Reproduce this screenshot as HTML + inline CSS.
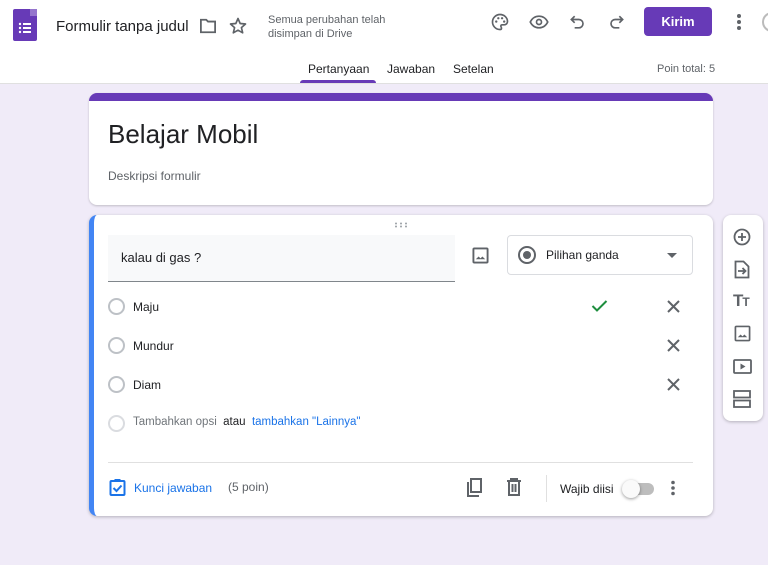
<!DOCTYPE html>
<html><head><style>
*{margin:0;padding:0;box-sizing:border-box}
body{width:768px;height:565px;overflow:hidden;background:#f0ebf8;font-family:"Liberation Sans",Arial,sans-serif;color:#202124;position:relative}
.a{position:absolute}
svg{display:block}
</style></head><body>
<div class="a" style="left:0;top:0;width:768px;height:84px;background:#fff;border-bottom:1px solid #e0e0e0"></div>
<div class="a" style="left:13px;top:9px;width:24px;height:32px;background:#673ab7;border-radius:2px"></div>
<div class="a" style="left:30px;top:9px;width:7px;height:7px;background:#9575cd"></div>
<svg class="a" style="left:13px;top:9px" width="24" height="32"><g fill="#fff"><circle cx="7" cy="15" r="1.2"/><circle cx="7" cy="19" r="1.2"/><circle cx="7" cy="23" r="1.2"/><rect x="10" y="14" width="8" height="2"/><rect x="10" y="18" width="8" height="2"/><rect x="10" y="22" width="8" height="2"/></g></svg>
<div class="a" style="left:56px;top:18px;font-size:15px;color:#202124">Formulir tanpa judul</div>
<svg class="a" style="left:199px;top:18px" width="18" height="16" viewBox="0 0 20 18"><path d="M2 2h6l2 2h8v12H2z" fill="none" stroke="#5f6368" stroke-width="2"/></svg>
<svg class="a" style="left:228px;top:16px" width="20" height="20" viewBox="0 0 24 24"><path d="M12 3l2.6 6 6.4.6-4.9 4.3 1.5 6.3L12 17l-5.6 3.2 1.5-6.3L3 9.6l6.4-.6z" fill="none" stroke="#5f6368" stroke-width="2" stroke-linejoin="round"/></svg>
<div class="a" style="left:268px;top:13px;font-size:11px;color:#5f6368;line-height:14px">Semua perubahan telah<br>disimpan di Drive</div>
<svg class="a" style="left:490px;top:12px" width="20" height="20" viewBox="0 0 24 24"><path d="M12 3a9 9 0 0 0 0 18c1.2 0 1.8-.8 1.8-1.7 0-1-.8-1.3-.8-2.3 0-1 .8-1.6 1.8-1.6H17a4 4 0 0 0 4-4c0-4.6-4-8.4-9-8.4z" fill="none" stroke="#5f6368" stroke-width="2"/><g fill="#5f6368"><circle cx="7.5" cy="11.5" r="1.4"/><circle cx="10" cy="7.5" r="1.4"/><circle cx="14.5" cy="7.5" r="1.4"/><circle cx="17" cy="11.5" r="1.4"/></g></svg>
<svg class="a" style="left:528px;top:12px" width="22" height="20" viewBox="0 0 24 24"><path d="M1.5 12C4 7 8 5 12 5s8 2 10.5 7C20 17 16 19 12 19S4 17 1.5 12z" fill="none" stroke="#5f6368" stroke-width="2"/><circle cx="12" cy="12" r="3" fill="none" stroke="#5f6368" stroke-width="2"/></svg>
<svg class="a" style="left:568px;top:12px" width="20" height="20" viewBox="0 0 24 24"><path d="M8 5L4 9l4 4M4 9h9a5 5 0 0 1 0 10H8" fill="none" stroke="#5f6368" stroke-width="2"/></svg>
<svg class="a" style="left:606px;top:12px" width="20" height="20" viewBox="0 0 24 24"><path d="M16 5l4 4-4 4M20 9h-9a5 5 0 0 0 0 10h5" fill="none" stroke="#5f6368" stroke-width="2"/></svg>
<div class="a" style="left:644px;top:7px;width:68px;height:29px;background:#673ab7;border-radius:4px;color:#fff;font-size:13px;font-weight:bold;text-align:center;line-height:29px">Kirim</div>
<svg class="a" style="left:736px;top:13px" width="6" height="18"><g fill="#5f6368"><circle cx="3" cy="3" r="2"/><circle cx="3" cy="9" r="2"/><circle cx="3" cy="15" r="2"/></g></svg>
<div class="a" style="left:762px;top:12px;width:20px;height:20px;border-radius:50%;border:2px solid #bbb"></div>
<div class="a" style="left:308px;top:62px;font-size:12px;color:#202124">Pertanyaan</div>
<div class="a" style="left:300px;top:80px;width:76px;height:3px;background:#673ab7;border-radius:3px 3px 0 0"></div>
<div class="a" style="left:387px;top:62px;font-size:12px;color:#202124">Jawaban</div>
<div class="a" style="left:453px;top:62px;font-size:12px;color:#202124">Setelan</div>
<div class="a" style="left:657px;top:63px;font-size:11px;color:#5f6368">Poin total: 5</div>
<div class="a" style="left:89px;top:93px;width:624px;height:112px;background:#fff;border-radius:8px;border-top:8px solid #673ab7;box-shadow:0 1px 2px rgba(0,0,0,.2)"></div>
<div class="a" style="left:108px;top:119px;font-size:26px;color:#202124">Belajar Mobil</div>
<div class="a" style="left:108px;top:169px;font-size:12px;color:#5f6368">Deskripsi formulir</div>
<div class="a" style="left:89px;top:215px;width:624px;height:301px;background:#fff;border-radius:8px;border-left:5px solid #4285f4;box-shadow:0 1px 3px rgba(0,0,0,.25)"></div>
<svg class="a" style="left:394px;top:222px" width="14" height="6"><g fill="#9aa0a6"><circle cx="2" cy="1.5" r="1"/><circle cx="7" cy="1.5" r="1"/><circle cx="12" cy="1.5" r="1"/><circle cx="2" cy="4.5" r="1"/><circle cx="7" cy="4.5" r="1"/><circle cx="12" cy="4.5" r="1"/></g></svg>
<div class="a" style="left:108px;top:235px;width:347px;height:47px;background:#f8f9fa;border-bottom:1px solid #80868b"></div>
<div class="a" style="left:121px;top:250px;font-size:13px;color:#202124">kalau di gas ?</div>
<svg class="a" style="left:472px;top:247px" width="17" height="17" viewBox="0 0 18 18"><rect x="1.5" y="1.5" width="15" height="15" rx="1" fill="none" stroke="#5f6368" stroke-width="2"/><path d="M4 13l3-3 2 2 2-2 3 3z" fill="#5f6368"/></svg>
<div class="a" style="left:507px;top:235px;width:186px;height:40px;border:1px solid #dadce0;border-radius:4px"></div>
<div class="a" style="left:518px;top:246px;width:18px;height:18px;border:2px solid #5f6368;border-radius:50%"></div>
<div class="a" style="left:523px;top:251px;width:8px;height:8px;background:#5f6368;border-radius:50%"></div>
<div class="a" style="left:546px;top:248px;font-size:12px;color:#202124">Pilihan ganda</div>
<div class="a" style="left:667px;top:253px;width:0;height:0;border-left:5px solid transparent;border-right:5px solid transparent;border-top:5px solid #5f6368"></div>
<div class="a" style="left:108px;top:298px;width:17px;height:17px;border:2px solid #bdc1c6;border-radius:50%"></div>
<div class="a" style="left:133px;top:300px;font-size:12px">Maju</div>
<div class="a" style="left:108px;top:337px;width:17px;height:17px;border:2px solid #bdc1c6;border-radius:50%"></div>
<div class="a" style="left:133px;top:339px;font-size:12px">Mundur</div>
<div class="a" style="left:108px;top:376px;width:17px;height:17px;border:2px solid #bdc1c6;border-radius:50%"></div>
<div class="a" style="left:133px;top:378px;font-size:12px">Diam</div>
<div class="a" style="left:108px;top:415px;width:17px;height:17px;border:2px solid #dadce0;border-radius:50%"></div>
<div class="a" style="left:133px;top:416px;font-size:11.5px;color:#70757a">Tambahkan opsi <span style="color:#202124">&nbsp;atau&nbsp;</span> <span style="color:#1a73e8">tambahkan "Lainnya"</span></div>
<svg class="a" style="left:591px;top:299px" width="17" height="13" viewBox="0 0 17 13"><path d="M1.5 7l4.5 4.5L15.5 2" fill="none" stroke="#1e8e3e" stroke-width="2"/></svg>
<svg class="a" style="left:667px;top:300px" width="13" height="13" viewBox="0 0 13 13"><path d="M1 1l11 11M12 1L1 12" stroke="#5f6368" stroke-width="2"/></svg>
<svg class="a" style="left:667px;top:339px" width="13" height="13" viewBox="0 0 13 13"><path d="M1 1l11 11M12 1L1 12" stroke="#5f6368" stroke-width="2"/></svg>
<svg class="a" style="left:667px;top:378px" width="13" height="13" viewBox="0 0 13 13"><path d="M1 1l11 11M12 1L1 12" stroke="#5f6368" stroke-width="2"/></svg>
<div class="a" style="left:108px;top:462px;width:585px;height:1px;background:#e0e0e0"></div>
<svg class="a" style="left:109px;top:478px" width="17" height="18" viewBox="0 0 17 18"><rect x="1.5" y="3" width="14" height="14" rx="1" fill="none" stroke="#1a73e8" stroke-width="2"/><rect x="5.5" y="1" width="6" height="3" fill="#1a73e8"/><path d="M4.5 10l3 3 5-5.5" fill="none" stroke="#1a73e8" stroke-width="2"/></svg>
<div class="a" style="left:134px;top:481px;font-size:12px;color:#1a73e8">Kunci jawaban</div>
<div class="a" style="left:228px;top:480px;font-size:12px;color:#5f6368">(5 poin)</div>
<svg class="a" style="left:466px;top:478px" width="17" height="19" viewBox="0 0 17 19"><path d="M2 4v14h11" fill="none" stroke="#5f6368" stroke-width="2"/><rect x="5" y="1" width="10" height="13" fill="none" stroke="#5f6368" stroke-width="2"/></svg>
<svg class="a" style="left:506px;top:478px" width="16" height="18" viewBox="0 0 16 18"><path d="M1 3h14M5 3V1h6v2M3 3v14h10V3M6.5 6v8M9.5 6v8" fill="none" stroke="#5f6368" stroke-width="2"/></svg>
<div class="a" style="left:546px;top:475px;width:1px;height:27px;background:#e0e0e0"></div>
<div class="a" style="left:560px;top:482px;font-size:12px;color:#202124">Wajib diisi</div>
<div class="a" style="left:624px;top:483px;width:30px;height:12px;background:#bdbdbd;border-radius:6px"></div>
<div class="a" style="left:622px;top:480px;width:18px;height:18px;background:#fafafa;border-radius:50%;box-shadow:0 1px 3px rgba(0,0,0,.4)"></div>
<svg class="a" style="left:670px;top:480px" width="6" height="16"><g fill="#5f6368"><circle cx="3" cy="2.5" r="1.8"/><circle cx="3" cy="8" r="1.8"/><circle cx="3" cy="13.5" r="1.8"/></g></svg>
<div class="a" style="left:723px;top:215px;width:40px;height:206px;background:#fff;border-radius:8px;box-shadow:0 1px 3px rgba(0,0,0,.25)"></div>
<svg class="a" style="left:733px;top:228px" width="18" height="18" viewBox="0 0 18 18"><circle cx="9" cy="9" r="7.5" fill="none" stroke="#5f6368" stroke-width="1.8"/><path d="M9 5v8M5 9h8" stroke="#5f6368" stroke-width="1.8"/></svg>
<svg class="a" style="left:734px;top:260px" width="16" height="19" viewBox="0 0 16 19"><path d="M1.5 1.5h8l5 5v11h-13z" fill="none" stroke="#5f6368" stroke-width="1.8"/><path d="M4 11h7M8.5 8l3 3-3 3" fill="none" stroke="#5f6368" stroke-width="1.8"/></svg>
<div class="a" style="left:733px;top:291px;font-size:17px;font-weight:bold;color:#5f6368;letter-spacing:-1px">T<span style="font-size:12px">T</span></div>
<svg class="a" style="left:734px;top:325px" width="17" height="17" viewBox="0 0 18 18"><rect x="1.5" y="1.5" width="15" height="15" rx="1" fill="none" stroke="#5f6368" stroke-width="1.8"/><path d="M4 13l3-3 2 2 2-2 3 3z" fill="#5f6368"/></svg>
<svg class="a" style="left:733px;top:359px" width="19" height="15" viewBox="0 0 19 15"><rect x="1" y="1" width="17" height="13" rx="1" fill="none" stroke="#5f6368" stroke-width="1.8"/><path d="M7.5 4.5v6l5-3z" fill="#5f6368"/></svg>
<svg class="a" style="left:733px;top:390px" width="18" height="18" viewBox="0 0 18 18"><rect x="1" y="1" width="16" height="6.5" fill="none" stroke="#5f6368" stroke-width="1.8"/><rect x="1" y="10.5" width="16" height="6.5" fill="none" stroke="#5f6368" stroke-width="1.8"/></svg>
</body></html>
